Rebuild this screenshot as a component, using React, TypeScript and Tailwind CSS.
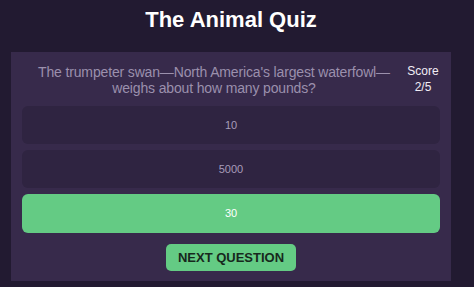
export default function App() {
  const options = [
    { label: '10', correct: false },
    { label: '5000', correct: false },
    { label: '30', correct: true },
  ];

  return (
    <div className="w-[474px] h-[287px] overflow-hidden bg-[#221a31] font-['Liberation_Sans',Arial,sans-serif]">
      <div className="w-[462px]">
        <h1 className="pt-[7px] h-[52px] text-center text-[22px] leading-[26px] font-bold text-white">The Animal Quiz</h1>
        <div className="ml-[11px] w-[440px] h-[229px] bg-[#372a4b] px-[11px] pt-[12px]">
          <div className="flex items-start">
            <p className="flex-1 text-center text-[14px] leading-[16px] text-[#9b90ad] tracking-[-0.15px]">
              The trumpeter swan—North America's largest waterfowl—weighs about how many pounds?
            </p>
            <div className="w-[34px] text-center text-[12px] leading-[16px] text-[#f1edf5] -mt-[1px]">
              <div>Score</div>
              <div>2/5</div>
            </div>
          </div>
          <div className="mt-[10px] flex flex-col gap-[6px]">
            {options.map((o) => (
              <div
                key={o.label}
                className={
                  o.correct
                    ? 'h-[39px] rounded-[6px] bg-[#64cb84] flex items-center justify-center text-[11px] text-white'
                    : 'h-[38px] rounded-[6px] bg-[#2f2441] flex items-center justify-center text-[11px] text-[#a79cb9]'
                }
              >
                {o.label}
              </div>
            ))}
          </div>
          <div className="mt-[11px] flex justify-center">
            <button className="w-[130px] h-[27px] rounded-[5px] bg-[#64cb84] text-[13px] font-bold text-[#17281d]">
              NEXT QUESTION
            </button>
          </div>
        </div>
      </div>
    </div>
  );
}
